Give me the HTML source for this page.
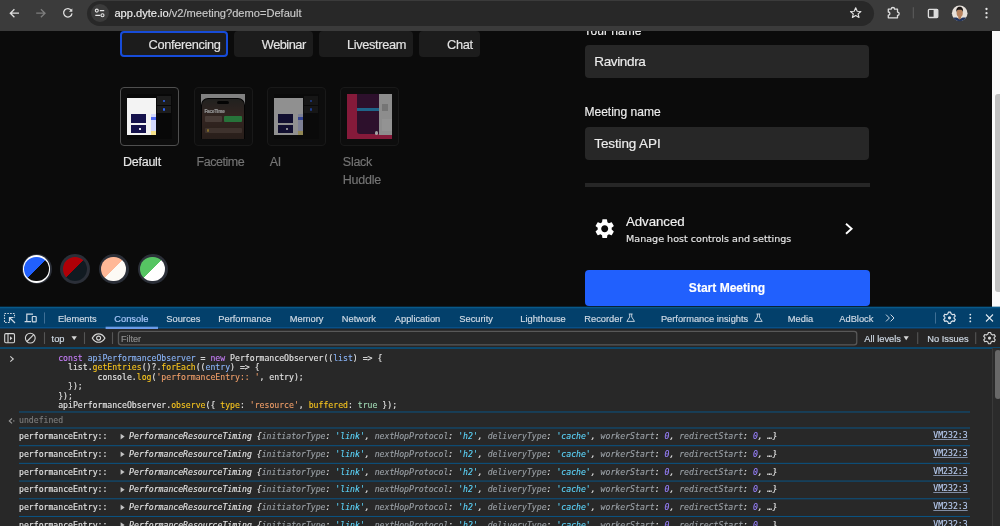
<!DOCTYPE html>
<html><head><meta charset="utf-8"><title>app.dyte.io</title>
<style>
*{box-sizing:border-box;margin:0;padding:0}
html,body{width:1000px;height:526px;overflow:hidden;background:#0b0b0b;font-family:"Liberation Sans",sans-serif;color:#e6e6e6;-webkit-text-stroke:.16px currentColor}
.abs{position:absolute}
svg{position:absolute;overflow:visible}
#root{position:relative;width:1000px;height:526px;overflow:hidden;will-change:transform}
#tb{left:0;top:0;width:1000px;height:30.5px;background:#3b3b3b}
#pill{left:87px;top:1px;width:786.5px;height:25px;border-radius:13px;background:#282828}
#site{left:90.5px;top:4px;width:18px;height:18px;border-radius:9px;background:#3b3b3b}
#url{left:114.4px;top:6.3px;font-size:11.1px;line-height:14px;color:#c9c9c9;white-space:nowrap}
#url b{font-weight:normal;color:#ededed}
.tab{top:30.8px;height:26.2px;border-radius:4px;background:#1c1c1c;font-size:12.8px;letter-spacing:-0.35px;line-height:27px;color:#e4e4e4;text-align:right;white-space:nowrap}
.card{top:87px;width:59.4px;height:59.4px;border-radius:4px;border:1px solid #191919;background:#0d0d0d;overflow:hidden}
.lbl{font-size:12.5px;letter-spacing:-0.25px;line-height:18px;color:#747474;white-space:nowrap}
.inp{left:585px;width:284px;height:32.6px;border-radius:4px;background:#272727;font-size:13.5px;line-height:33px;padding-left:9.3px;color:#ededed;white-space:nowrap}
.flabel{left:584.5px;font-size:12.05px;letter-spacing:-0.02px;line-height:16px;color:#ececec;white-space:nowrap}
.circ{top:254px;width:30px;height:30px;border-radius:50%;background:#2b2f38}
.circ i{position:absolute;left:2.8px;top:2.8px;width:24.4px;height:24.4px;border-radius:50%}
#dt{left:0;top:307px;width:1000px;height:219px;background:#282828}
#dtabs{left:0;top:1px;width:1000px;height:20px}
.dtab{top:4.9px;font-size:9.3px;letter-spacing:0;-webkit-text-stroke:.18px currentColor;line-height:12px;color:#cfd9e4;white-space:nowrap}
#dbar{left:0;top:21px;width:1000px;height:20px}
.sep{width:1px;background:#575757}
.mono{font-family:"DejaVu Sans Mono","Liberation Mono",monospace;font-size:8.17px;line-height:9.45px;white-space:pre;color:#e3e3e3;-webkit-text-stroke:.12px currentColor}
.k{color:#c47df6}.d{color:#8ab4f8}.f{color:#f5c31f}.s{color:#ee9d68}.t{color:#a1d9b5}
.g{color:#9aa0a6;font-style:italic}.c{color:#5cd5fb;font-style:italic}.n{color:#9980ff;font-style:italic}.it{font-style:italic}
.ln{left:19px;width:950px;height:1.2px;background:#0a4570}
</style></head><body><div id="root">

<!-- ===== page ===== -->
<div class="abs tab" style="left:120px;width:108.3px;border:2px solid #174cd9;line-height:23px;padding-right:5.8px">Conferencing</div>
<div class="abs tab" style="left:234px;width:79.3px;padding-right:7.6px;letter-spacing:-0.5px">Webinar</div>
<div class="abs tab" style="left:319.2px;width:94.2px;padding-right:7.4px">Livestream</div>
<div class="abs tab" style="left:419.2px;width:61px;padding-right:7.5px">Chat</div>

<div class="abs card" style="left:120px;border-color:#4f4f4f;border-width:1.3px">
  <div class="abs" style="left:5.7px;top:6px;width:45px;height:45.2px;background:#080808"></div>
  <div class="abs" style="left:6.1px;top:9.8px;width:29.2px;height:37.3px;background:#f3f3f3"></div>
  <div class="abs" style="left:9.5px;top:26.4px;width:15.2px;height:8.3px;background:#15124c"></div>
  <div class="abs" style="left:9.5px;top:36.7px;width:15.2px;height:8.3px;background:#15124c"></div>
  <div class="abs" style="left:17.5px;top:39.5px;width:2px;height:2px;background:#e8e8f5"></div>
  <div class="abs" style="left:29.5px;top:25.6px;width:5.8px;height:17.5px;background:#d3d8fc"></div>
  <div class="abs" style="left:29.5px;top:28.5px;width:5.8px;height:3.4px;background:#4f6af2"></div>
  <div class="abs" style="left:29.5px;top:42.9px;width:5.8px;height:4.2px;background:#f6e38c"></div>
  <div class="abs" style="left:35.7px;top:8.4px;width:14.1px;height:8.7px;background:#1d1d1d"></div>
  <div class="abs" style="left:35.7px;top:17.8px;width:14.1px;height:7.5px;background:#1d1d1d"></div>
  <div class="abs" style="left:41.6px;top:11.6px;width:2.6px;height:2.6px;background:#2e63f5;border-radius:50%"></div>
  <div class="abs" style="left:41.6px;top:20px;width:2.6px;height:2.6px;background:#2e63f5;border-radius:50%"></div>
</div>
<div class="abs card" style="left:193.7px">
<div class="abs" style="left:0;top:0;width:58px;height:58px;opacity:.62">
  <div class="abs" style="left:5.9px;top:6.1px;width:44.7px;height:44.7px;background:#c9c9c9"></div>
  <div class="abs" style="left:6.6px;top:10.2px;width:43.5px;height:41px;background:linear-gradient(#2f2e2b,#4a342d 45%,#3a2923);border:1.6px solid #000;border-bottom:0;border-radius:7px 7px 0 0"></div>
  <div class="abs" style="left:22.5px;top:12.6px;width:12px;height:3.4px;background:#000;border-radius:2px"></div>
  <div class="abs" style="left:9.7px;top:20.6px;font-size:4.6px;line-height:5px;font-weight:bold;color:#e8e8e8;letter-spacing:-0.1px">FaceTime</div>
  <div class="abs" style="left:10.1px;top:27.7px;width:17.1px;height:6.3px;background:#6d5a52;border-radius:1px"></div>
  <div class="abs" style="left:29px;top:27.7px;width:17.9px;height:6.3px;background:#38b257;border-radius:1px"></div>
  <div class="abs" style="left:10.1px;top:40.2px;width:36.8px;height:4.8px;background:#5c4a42;border-radius:1px"></div>
  <div class="abs" style="left:12px;top:41px;width:2.6px;height:2.6px;background:#c9a43c;border-radius:50%"></div>
</div></div>
<div class="abs card" style="left:267px">
<div class="abs" style="left:0;top:0;width:58px;height:58px;opacity:.57">
  <div class="abs" style="left:5.7px;top:6px;width:45px;height:45.2px;background:#080808"></div>
  <div class="abs" style="left:6.1px;top:9.8px;width:29.2px;height:37.3px;background:#f3f3f3"></div>
  <div class="abs" style="left:9.5px;top:26.4px;width:15.2px;height:8.3px;background:#15124c"></div>
  <div class="abs" style="left:9.5px;top:36.7px;width:15.2px;height:8.3px;background:#15124c"></div>
  <div class="abs" style="left:17.5px;top:39.5px;width:2px;height:2px;background:#e8e8f5"></div>
  <div class="abs" style="left:29.5px;top:25.6px;width:5.8px;height:17.5px;background:#d3d8fc"></div>
  <div class="abs" style="left:29.5px;top:28.5px;width:5.8px;height:3.4px;background:#4f6af2"></div>
  <div class="abs" style="left:29.5px;top:42.9px;width:5.8px;height:4.2px;background:#f6e38c"></div>
  <div class="abs" style="left:35.7px;top:8.4px;width:14.1px;height:8.7px;background:#1d1d1d"></div>
  <div class="abs" style="left:35.7px;top:17.8px;width:14.1px;height:7.5px;background:#1d1d1d"></div>
  <div class="abs" style="left:41.6px;top:11.6px;width:2.6px;height:2.6px;background:#2e63f5;border-radius:50%"></div>
  <div class="abs" style="left:41.6px;top:20px;width:2.6px;height:2.6px;background:#2e63f5;border-radius:50%"></div>
</div></div>
<div class="abs card" style="left:340px">
<div class="abs" style="left:0;top:0;width:58px;height:58px;opacity:.62">
  <div class="abs" style="left:5.8px;top:6.1px;width:44.9px;height:44.7px;background:#cf2257"></div>
  <div class="abs" style="left:16.2px;top:6.1px;width:21.6px;height:40.3px;background:#42133f;border-radius:0 0 0 3px"></div>
  <div class="abs" style="left:37.8px;top:6.1px;width:12.9px;height:40.6px;background:#dcdcdc"></div>
  <div class="abs" style="left:16.2px;top:19.9px;width:21.6px;height:3px;background:#2a9ad6"></div>
  <div class="abs" style="left:41.4px;top:16.3px;width:5.8px;height:6.4px;background:#b5b5b5"></div>
  <div class="abs" style="left:41.4px;top:31.2px;width:9.3px;height:11.7px;background:#e6e6e6"></div>
  <div class="abs" style="left:33.6px;top:43.2px;width:3.4px;height:3.4px;background:#ffffff;border-radius:50%"></div>
</div></div>

<div class="abs lbl" style="left:123px;top:153.3px;color:#e6e6e6">Default</div>
<div class="abs lbl" style="left:196.5px;top:153.3px;letter-spacing:-0.45px">Facetime</div>
<div class="abs lbl" style="left:269.7px;top:153.3px">AI</div>
<div class="abs lbl" style="left:342.8px;top:153.3px">Slack</div>
<div class="abs lbl" style="left:342.8px;top:171.3px">Huddle</div>

<div class="abs circ" style="left:21.7px"><i style="left:1.4px;top:1.4px;width:27.2px;height:27.2px;background:#fff"></i><i style="background:linear-gradient(135deg,#2160fd 50%,#0b0b0b 50%)"></i></div>
<div class="abs circ" style="left:60.1px"><i style="background:linear-gradient(135deg,#b00007 50%,#111a21 50%)"></i></div>
<div class="abs circ" style="left:98.7px"><i style="background:linear-gradient(135deg,#ffb897 50%,#fdfaf5 50%)"></i></div>
<div class="abs circ" style="left:137.5px"><i style="background:linear-gradient(135deg,#56c563 50%,#ffffff 50%)"></i></div>

<div class="abs flabel" style="top:23px;left:583.7px">Your name</div>
<div class="abs inp" style="top:45px;letter-spacing:-0.36px">Ravindra</div>
<div class="abs flabel" style="top:104px">Meeting name</div>
<div class="abs inp" style="top:127px;letter-spacing:-0.12px">Testing API</div>
<div class="abs" style="left:584.5px;top:183.4px;width:285px;height:3.2px;background:#262626"></div>

<svg style="left:593px;top:216.7px" width="23.4" height="23.4" viewBox="0 0 24 24"><path fill="#fff" d="M19.14 12.94c.04-.3.06-.61.06-.94 0-.32-.02-.64-.07-.94l2.03-1.58a.49.49 0 0 0 .12-.61l-1.92-3.32a.488.488 0 0 0-.59-.22l-2.39.96c-.5-.38-1.03-.7-1.62-.94l-.36-2.54a.484.484 0 0 0-.48-.41h-3.84c-.24 0-.43.17-.47.41l-.36 2.54c-.59.24-1.13.57-1.62.94l-2.39-.96c-.22-.08-.47 0-.59.22L2.74 8.87c-.12.21-.08.47.12.61l2.03 1.58c-.05.3-.09.63-.09.94s.02.64.07.94l-2.03 1.58a.49.49 0 0 0-.12.61l1.92 3.32c.12.22.37.29.59.22l2.39-.96c.5.38 1.03.7 1.62.94l.36 2.54c.05.24.24.41.48.41h3.84c.24 0 .44-.17.47-.41l.36-2.54c.59-.24 1.13-.56 1.62-.94l2.39.96c.22.08.47 0 .59-.22l1.92-3.32c.12-.22.07-.47-.12-.61l-2.01-1.58zM12 15.6c-1.98 0-3.6-1.62-3.6-3.6s1.62-3.6 3.6-3.6 3.6 1.62 3.6 3.6-1.62 3.6-3.6 3.6z"/></svg>
<div class="abs" style="left:626px;top:213.2px;font-size:13.3px;letter-spacing:-0.07px;line-height:18px;color:#f0f0f0;white-space:nowrap">Advanced</div>
<div class="abs" style="left:626px;top:231.7px;font-family:'DejaVu Sans','Liberation Sans',sans-serif;font-size:9.58px;line-height:14px;color:#e4e4e4;white-space:nowrap">Manage host controls and settings</div>
<svg style="left:843px;top:221px" width="12" height="15" viewBox="0 0 12 15"><path d="M3 2.7 L8.6 7.7 L3 12.7" fill="none" stroke="#fff" stroke-width="1.9"/></svg>
<div class="abs" style="left:584.5px;top:270px;width:285px;height:36px;border-radius:4px;background:#2160fd;color:#fff;font-weight:bold;font-size:12.05px;letter-spacing:0;line-height:37.4px;text-align:center">Start Meeting</div>

<div class="abs" style="left:991.5px;top:30px;width:8.5px;height:277.5px;background:#fafafa"></div>
<div class="abs" style="left:995.3px;top:94px;width:5px;height:198px;background:#c1c1c1;border-radius:3px 0 0 3px"></div>

<!-- ===== chrome toolbar ===== -->
<div class="abs" id="tb"></div>
<div class="abs" id="pill"></div>
<div class="abs" id="site"></div>
<div class="abs" id="url"><b>app.dyte.io</b>/v2/meeting?demo=Default</div>
<svg style="left:0;top:0" width="1000" height="30" viewBox="0 0 1000 30" fill="none" stroke-linecap="butt">
 <path d="M19 13.2H10.6M14.4 9.2L10.3 13.2L14.4 17.2" stroke="#dedede" stroke-width="1.3"/>
 <path d="M36.2 13.2H44.7M40.9 9.2L45 13.2L40.9 17.2" stroke="#7e7e7e" stroke-width="1.3"/>
 <path d="M71.4 10.6A4.2 4.2 0 1 0 72 13.3" stroke="#dedede" stroke-width="1.3"/>
 <path d="M72.3 8.4V11.8H68.9Z" fill="#dedede"/>
 <circle cx="96.8" cy="10.6" r="1.5" stroke="#e4e4e4" stroke-width="1.1"/>
 <path d="M99.8 10.6H104.2M95.3 15.3H100.3" stroke="#e4e4e4" stroke-width="1.3"/>
 <circle cx="102.5" cy="15.3" r="1.5" stroke="#e4e4e4" stroke-width="1.1"/>
 <path d="M855.7 7.8L857.2 11.2L860.9 11.5L858.1 13.9L859 17.5L855.7 15.6L852.4 17.5L853.3 13.9L850.5 11.5L854.2 11.2Z" stroke="#e2e2e2" stroke-width="1.15" stroke-linejoin="round"/>
 <path d="M888.3 9.2H891.2A1.7 1.7 0 0 1 894.6 9.2H897.5V12.1A1.7 1.7 0 0 1 897.5 15.5V17.8H888.3V15.2A1.6 1.6 0 0 0 888.3 12Z" stroke="#dedede" stroke-width="1.3" stroke-linejoin="round"/>
 <path d="M913.3 7.2V18.4" stroke="#5e5e5e" stroke-width="1"/>
 <rect x="928.4" y="9.3" width="9.4" height="8.2" rx="1" stroke="#dedede" stroke-width="1.3"/>
 <rect x="933.6" y="9.3" width="4.2" height="8.2" fill="#dedede"/>
 <circle cx="959.7" cy="13.3" r="7.8" fill="#e6e0da"/>
 <path d="M953.3 17.8C955.5 17.2 957.3 17.1 959.7 19.2C962.1 17.1 963.9 17.2 966.1 17.8A7.8 7.8 0 0 1 953.3 17.8Z" fill="#22345c"/>
 <path d="M958.3 15.5H961.1V18.3L959.7 19.6L958.3 18.3Z" fill="#b07c5a"/>
 <ellipse cx="959.7" cy="13" rx="3.1" ry="4.1" fill="#b8835f"/>
 <path d="M956.4 12.2C955.9 8.2 957.6 6.8 959.7 6.8S963.5 8.2 963 12.2C962.6 10.3 961.8 9.7 959.7 9.7S956.8 10.3 956.4 12.2Z" fill="#1f1a18"/>
 <circle cx="986.5" cy="9" r="1.15" fill="#e6e6e6"/><circle cx="986.5" cy="13.15" r="1.15" fill="#e6e6e6"/><circle cx="986.5" cy="17.3" r="1.15" fill="#e6e6e6"/>
</svg>

<!-- ===== devtools ===== -->
<div class="abs" id="dt">
 <svg style="left:0;top:-307px" width="1000" height="526" viewBox="0 0 1000 526" fill="none">
  <rect x="0" y="306.8" width="1000" height="21.8" fill="#03406b"/>
  <rect x="0" y="306.8" width="1000" height="1.5" fill="#08598a"/>
  <rect x="0" y="327.2" width="1000" height="1.4" fill="#0a5590"/>
  <rect x="0" y="328.6" width="1000" height="18.6" fill="#262525"/>
  <rect x="0" y="347.1" width="1000" height="1.8" fill="#0b4c74"/>
  <rect x="105.6" y="326.7" width="52.4" height="2.3" fill="#6a9be8"/>
  <rect x="118.45" y="331.4" width="738.3" height="13.5" rx="2.6" fill="#282828" stroke="#585858" stroke-width="1.3"/>
  <path d="M44.5 332.2V344M84.5 332.2V344M112.5 332.2V344M917.7 332.2V344M975.7 332.2V344" stroke="#555" stroke-width="1.1"/>
 </svg>
 <div class="abs" id="dtabs">
  <div class="abs dtab" style="left:58px">Elements</div>
  <div class="abs dtab" style="left:114.3px;color:#a8c7fa">Console</div>
  <div class="abs dtab" style="left:166.3px">Sources</div>
  <div class="abs dtab" style="left:218.3px">Performance</div>
  <div class="abs dtab" style="left:289.8px">Memory</div>
  <div class="abs dtab" style="left:341.8px">Network</div>
  <div class="abs dtab" style="left:394.8px">Application</div>
  <div class="abs dtab" style="left:459.3px">Security</div>
  <div class="abs dtab" style="left:520.3px">Lighthouse</div>
  <div class="abs dtab" style="left:584.3px">Recorder</div>
  <div class="abs dtab" style="left:660.9px">Performance insights</div>
  <div class="abs dtab" style="left:787.8px">Media</div>
  <div class="abs dtab" style="left:839.3px">AdBlock</div>
 </div>
 <div class="abs" id="dbar">
  <div class="abs dtab" style="left:51.6px">top</div>
  <div class="abs dtab" style="left:120.9px;top:5px;color:#8c8c8c;font-size:9.1px">Filter</div>
  <div class="abs dtab" style="left:864.3px">All levels</div>
  <div class="abs dtab" style="left:927.2px">No Issues</div>
 </div>
<svg style="left:0;top:-307px" width="1000" height="526" viewBox="0 0 1000 526" fill="none"><path d="M9.5 322.5H4.5V313.5H14.5V318" stroke="#cfd9e4" stroke-width="1.1" stroke-dasharray="1.6 1.2"/><path d="M15 323L9.5 317.5M9.5 321.5V317.5H13.5" stroke="#cfd9e4" stroke-width="1.2"/><path d="M33 314.2H26.8V321.7H24.6H31" stroke="#cfd9e4" stroke-width="1.2"/><rect x="32.3" y="316.5" width="3.9" height="5.4" rx="0.6" stroke="#cfd9e4" stroke-width="1.2"/><path d="M44.5 312.4V323.6M935.5 312.4V323.6" stroke="#3f6f95" stroke-width="1"/><path d="M628.8 314H632.6M629.7 314V317L626.9 321.4H634.5L631.7 317V314" stroke="#cfd9e4" stroke-width="0.9" stroke-linejoin="round"/><path d="M756.5 314H760.3M757.4 314V317L754.6 321.4H762.2L759.4 317V314" stroke="#cfd9e4" stroke-width="0.9" stroke-linejoin="round"/><path d="M886 314.6L889.4 318L886 321.4M890.6 314.6L894 318L890.6 321.4" stroke="#cfd9e4" stroke-width="1"/><g transform="translate(949.5 317.8)" stroke="#dfe6ee" fill="none" stroke-width="1.15" stroke-linejoin="round"><path d="M-1.1 -5.6H1.1L1.6 -4L3.1 -3.1L4.7 -3.6L5.8 -1.7L4.6 -0.6V0.6L5.8 1.7L4.7 3.6L3.1 3.1L1.6 4L1.1 5.6H-1.1L-1.6 4L-3.1 3.1L-4.7 3.6L-5.8 1.7L-4.6 0.6V-0.6L-5.8 -1.7L-4.7 -3.6L-3.1 -3.1L-1.6 -4Z"/><circle r="1.6" fill="#dfe6ee" stroke="none"/></g><circle cx="970.3" cy="314.6" r="0.9" fill="#dfe6ee"/><circle cx="970.3" cy="318" r="0.9" fill="#dfe6ee"/><circle cx="970.3" cy="321.4" r="0.9" fill="#dfe6ee"/><path d="M986 314.5L993 321.5M993 314.5L986 321.5" stroke="#dfe6ee" stroke-width="1.1"/><rect x="4.7" y="333.6" width="9.8" height="9.2" rx="1.2" stroke="#d6d6d6" stroke-width="1.1"/><path d="M8 333.6V342.8" stroke="#d6d6d6" stroke-width="1.1"/><path d="M10 336.2L12.4 338.2L10 340.2Z" fill="#d6d6d6"/><circle cx="30.3" cy="338.1" r="4.9" stroke="#d6d6d6" stroke-width="1.1"/><path d="M26.9 341.5L33.7 334.7" stroke="#d6d6d6" stroke-width="1.1"/><path d="M71.5 336.2H76.9L74.2 340.3Z" fill="#d6d6d6"/><path d="M92.3 338.1C94 335.2 96.3 333.9 98.6 333.9S103.2 335.2 104.9 338.1C103.2 341 100.9 342.3 98.6 342.3S94 341 92.3 338.1Z" stroke="#d6d6d6" stroke-width="1.1"/><circle cx="98.6" cy="338.1" r="2" stroke="#d6d6d6" stroke-width="1.1"/><path d="M903.6 336.2H908.8L906.2 340.3Z" fill="#d6d6d6"/><g transform="translate(989.5 338.1)" stroke="#d6d6d6" fill="none" stroke-width="1.15" stroke-linejoin="round"><path d="M-1.1 -5.6H1.1L1.6 -4L3.1 -3.1L4.7 -3.6L5.8 -1.7L4.6 -0.6V0.6L5.8 1.7L4.7 3.6L3.1 3.1L1.6 4L1.1 5.6H-1.1L-1.6 4L-3.1 3.1L-4.7 3.6L-5.8 1.7L-4.6 0.6V-0.6L-5.8 -1.7L-4.7 -3.6L-3.1 -3.1L-1.6 -4Z"/><circle r="1.6" fill="#d6d6d6" stroke="none"/></g><path d="M10.3 356.3L13.3 359L10.3 361.7" stroke="#d0d0d0" stroke-width="1.1"/><path d="M12 418.5L9.3 420.9L12 423.3" stroke="#9a9a9a" stroke-width="1.1"/><circle cx="13.8" cy="420.9" r="0.7" fill="#9a9a9a"/><rect x="19" y="411.45" width="951" height="1.05" fill="#0b5280"/><rect x="19" y="427.45" width="951" height="1.05" fill="#0b5280"/><rect x="19" y="445.15" width="951" height="1.05" fill="#0b5280"/><rect x="19" y="462.85" width="951" height="1.05" fill="#0b5280"/><rect x="19" y="480.55" width="951" height="1.05" fill="#0b5280"/><rect x="19" y="498.25" width="951" height="1.05" fill="#0b5280"/><rect x="19" y="515.95" width="951" height="1.05" fill="#0b5280"/><path d="M120.6 433.8L124.6 436.6L120.6 439.4Z" fill="#c4c4c4"/><path d="M120.6 451.5L124.6 454.3L120.6 457.1Z" fill="#c4c4c4"/><path d="M120.6 469.2L124.6 472L120.6 474.8Z" fill="#c4c4c4"/><path d="M120.6 486.9L124.6 489.7L120.6 492.5Z" fill="#c4c4c4"/><path d="M120.6 504.6L124.6 507.4L120.6 510.2Z" fill="#c4c4c4"/><path d="M120.6 522.3L124.6 525.1L120.6 527.9Z" fill="#c4c4c4"/></svg>
 <div class="abs mono" style="left:58.2px;top:46.8px"><span class="k">const</span> <span class="d">apiPerformanceObserver</span> = <span class="k">new</span> PerformanceObserver((<span class="d">list</span>) =&gt; {
  list.<span class="f">getEntries</span>()?.<span class="f">forEach</span>((<span class="d">entry</span>) =&gt; {
        console.<span class="f">log</span>(<span class="s">'performanceEntry:: '</span>, entry);
  });
});
apiPerformanceObserver.<span class="f">observe</span>({ <span class="f">type</span>: <span class="s">'resource'</span>, <span class="f">buffered</span>: <span class="t">true</span> });</div>
 <div class="abs mono" style="left:19px;top:108.8px;color:#7d7d7d">undefined</div>
 <div class="abs mono" style="left:19px;top:125.2px">performanceEntry::</div>
 <div class="abs mono" style="left:129.1px;top:125.2px"><span class="it">PerformanceResourceTiming {</span><span class="g">initiatorType</span><span class="it">: </span><span class="c">'link'</span><span class="it">, </span><span class="g">nextHopProtocol</span><span class="it">: </span><span class="c">'h2'</span><span class="it">, </span><span class="g">deliveryType</span><span class="it">: </span><span class="c">'cache'</span><span class="it">, </span><span class="g">workerStart</span><span class="it">: </span><span class="n">0</span><span class="it">, </span><span class="g">redirectStart</span><span class="it">: </span><span class="n">0</span><span class="it">, …}</span></div>
 <div class="abs mono" style="left:933.3px;top:124.2px;color:#b9cdf2;text-decoration:underline;text-decoration-color:rgba(185,205,242,.62);text-underline-offset:.5px">VM232:3</div>
 <div class="abs mono" style="left:19px;top:142.9px">performanceEntry::</div>
 <div class="abs mono" style="left:129.1px;top:142.9px"><span class="it">PerformanceResourceTiming {</span><span class="g">initiatorType</span><span class="it">: </span><span class="c">'link'</span><span class="it">, </span><span class="g">nextHopProtocol</span><span class="it">: </span><span class="c">'h2'</span><span class="it">, </span><span class="g">deliveryType</span><span class="it">: </span><span class="c">'cache'</span><span class="it">, </span><span class="g">workerStart</span><span class="it">: </span><span class="n">0</span><span class="it">, </span><span class="g">redirectStart</span><span class="it">: </span><span class="n">0</span><span class="it">, …}</span></div>
 <div class="abs mono" style="left:933.3px;top:141.9px;color:#b9cdf2;text-decoration:underline;text-decoration-color:rgba(185,205,242,.62);text-underline-offset:.5px">VM232:3</div>
 <div class="abs mono" style="left:19px;top:160.6px">performanceEntry::</div>
 <div class="abs mono" style="left:129.1px;top:160.6px"><span class="it">PerformanceResourceTiming {</span><span class="g">initiatorType</span><span class="it">: </span><span class="c">'link'</span><span class="it">, </span><span class="g">nextHopProtocol</span><span class="it">: </span><span class="c">'h2'</span><span class="it">, </span><span class="g">deliveryType</span><span class="it">: </span><span class="c">'cache'</span><span class="it">, </span><span class="g">workerStart</span><span class="it">: </span><span class="n">0</span><span class="it">, </span><span class="g">redirectStart</span><span class="it">: </span><span class="n">0</span><span class="it">, …}</span></div>
 <div class="abs mono" style="left:933.3px;top:159.6px;color:#b9cdf2;text-decoration:underline;text-decoration-color:rgba(185,205,242,.62);text-underline-offset:.5px">VM232:3</div>
 <div class="abs mono" style="left:19px;top:178.3px">performanceEntry::</div>
 <div class="abs mono" style="left:129.1px;top:178.3px"><span class="it">PerformanceResourceTiming {</span><span class="g">initiatorType</span><span class="it">: </span><span class="c">'link'</span><span class="it">, </span><span class="g">nextHopProtocol</span><span class="it">: </span><span class="c">'h2'</span><span class="it">, </span><span class="g">deliveryType</span><span class="it">: </span><span class="c">'cache'</span><span class="it">, </span><span class="g">workerStart</span><span class="it">: </span><span class="n">0</span><span class="it">, </span><span class="g">redirectStart</span><span class="it">: </span><span class="n">0</span><span class="it">, …}</span></div>
 <div class="abs mono" style="left:933.3px;top:177.3px;color:#b9cdf2;text-decoration:underline;text-decoration-color:rgba(185,205,242,.62);text-underline-offset:.5px">VM232:3</div>
 <div class="abs mono" style="left:19px;top:196px">performanceEntry::</div>
 <div class="abs mono" style="left:129.1px;top:196px"><span class="it">PerformanceResourceTiming {</span><span class="g">initiatorType</span><span class="it">: </span><span class="c">'link'</span><span class="it">, </span><span class="g">nextHopProtocol</span><span class="it">: </span><span class="c">'h2'</span><span class="it">, </span><span class="g">deliveryType</span><span class="it">: </span><span class="c">'cache'</span><span class="it">, </span><span class="g">workerStart</span><span class="it">: </span><span class="n">0</span><span class="it">, </span><span class="g">redirectStart</span><span class="it">: </span><span class="n">0</span><span class="it">, …}</span></div>
 <div class="abs mono" style="left:933.3px;top:195px;color:#b9cdf2;text-decoration:underline;text-decoration-color:rgba(185,205,242,.62);text-underline-offset:.5px">VM232:3</div>
 <div class="abs mono" style="left:19px;top:213.7px">performanceEntry::</div>
 <div class="abs mono" style="left:129.1px;top:213.7px"><span class="it">PerformanceResourceTiming {</span><span class="g">initiatorType</span><span class="it">: </span><span class="c">'link'</span><span class="it">, </span><span class="g">nextHopProtocol</span><span class="it">: </span><span class="c">'h2'</span><span class="it">, </span><span class="g">deliveryType</span><span class="it">: </span><span class="c">'cache'</span><span class="it">, </span><span class="g">workerStart</span><span class="it">: </span><span class="n">0</span><span class="it">, </span><span class="g">redirectStart</span><span class="it">: </span><span class="n">0</span><span class="it">, …}</span></div>
 <div class="abs mono" style="left:933.3px;top:212.7px;color:#b9cdf2;text-decoration:underline;text-decoration-color:rgba(185,205,242,.62);text-underline-offset:.5px">VM232:3</div>
 <div class="abs" style="left:992.2px;top:41px;width:7.8px;height:178px;background:#2b2b2b;border-left:1px solid #393939"></div>
 <div class="abs" style="left:994.7px;top:43.4px;width:6px;height:49px;background:#686868;border-radius:3px"></div>
</div>
</div></body></html>
